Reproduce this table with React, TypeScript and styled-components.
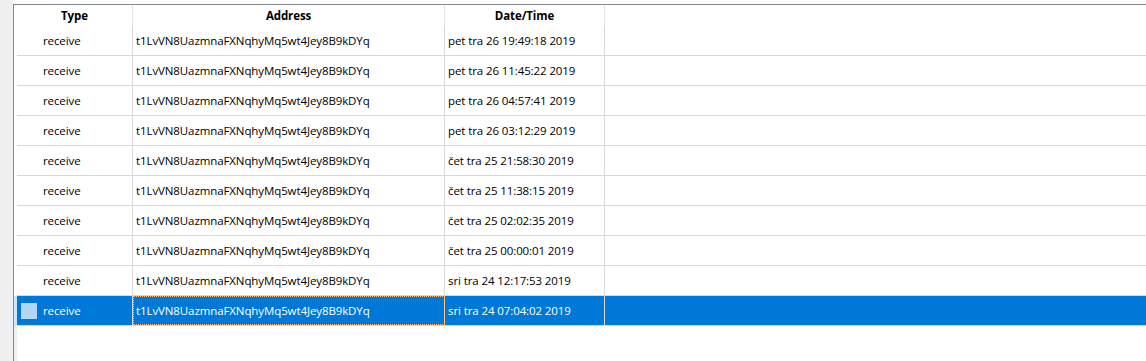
import React from 'react';
import styled, { createGlobalStyle } from 'styled-components';

const ROWS = [
  { type: 'receive', address: 't1LvVN8UazmnaFXNqhyMq5wt4Jey8B9kDYq', date: 'pet tra 26 19:49:18 2019' },
  { type: 'receive', address: 't1LvVN8UazmnaFXNqhyMq5wt4Jey8B9kDYq', date: 'pet tra 26 11:45:22 2019' },
  { type: 'receive', address: 't1LvVN8UazmnaFXNqhyMq5wt4Jey8B9kDYq', date: 'pet tra 26 04:57:41 2019' },
  { type: 'receive', address: 't1LvVN8UazmnaFXNqhyMq5wt4Jey8B9kDYq', date: 'pet tra 26 03:12:29 2019' },
  { type: 'receive', address: 't1LvVN8UazmnaFXNqhyMq5wt4Jey8B9kDYq', date: 'čet tra 25 21:58:30 2019' },
  { type: 'receive', address: 't1LvVN8UazmnaFXNqhyMq5wt4Jey8B9kDYq', date: 'čet tra 25 11:38:15 2019' },
  { type: 'receive', address: 't1LvVN8UazmnaFXNqhyMq5wt4Jey8B9kDYq', date: 'čet tra 25 02:02:35 2019' },
  { type: 'receive', address: 't1LvVN8UazmnaFXNqhyMq5wt4Jey8B9kDYq', date: 'čet tra 25 00:00:01 2019' },
  { type: 'receive', address: 't1LvVN8UazmnaFXNqhyMq5wt4Jey8B9kDYq', date: 'sri tra 24 12:17:53 2019' },
  { type: 'receive', address: 't1LvVN8UazmnaFXNqhyMq5wt4Jey8B9kDYq', date: 'sri tra 24 07:04:02 2019' },
];

const SELECTED = 9;

const App = () => {
  return (
    <>
      <GlobalStyle />
      <Page>
        <Gutter />
        <Frame>
          <HeaderRow>
            <Corner />
            <HeadCell width={116}>Type</HeadCell>
            <HeadCell width={312}>Address</HeadCell>
            <HeadCell width={160}>Date/Time</HeadCell>
            <HeadFill />
          </HeaderRow>
          {ROWS.map((row, idx) => {
            const sel = idx === SELECTED;
            return (
              <Row key={idx} selected={sel}>
                <RowHandle selected={sel} />
                <TypeCell>
                  <Deco selected={sel} />
                  {row.type}
                </TypeCell>
                <Cell width={312} focused={sel}>{row.address}</Cell>
                <Cell width={160}>{row.date}</Cell>
                <FillCell />
              </Row>
            );
          })}
          <Rest>
            <RestHandle />
          </Rest>
        </Frame>
      </Page>
    </>
  );
};

export default App;

const GlobalStyle = createGlobalStyle`
  html, body {
    margin: 0;
    padding: 0;
    background: #ffffff;
  }
  body {
    font-family: 'Open Sans', 'Noto Sans', sans-serif;
    font-size: 11.5px;
    letter-spacing: -0.1px;
    color: #000000;
  }
`;

const Page = styled.div`
  display: flex;
  width: 1146px;
  height: 361px;
  overflow: hidden;
`;

const Gutter = styled.div`
  width: 13px;
  flex-shrink: 0;
  background: #f0f0f0;
`;

const Frame = styled.div`
  flex: 1;
  display: flex;
  flex-direction: column;
  margin-top: 4px;
  border-top: 1px solid #828790;
  border-left: 1px solid #828790;
  background: #ffffff;
`;

const HeaderRow = styled.div`
  display: flex;
  height: 21px;
`;

const Corner = styled.div`
  width: 3px;
  flex-shrink: 0;
`;

const HeadCell = styled.div<{ width: number }>`
  width: ${p => p.width}px;
  flex-shrink: 0;
  box-sizing: border-box;
  border-right: 1px solid #e5e5e5;
  display: flex;
  align-items: center;
  justify-content: center;
  font-weight: 700;
`;

const HeadFill = styled.div`
  flex: 1;
`;

const Row = styled.div<{ selected: boolean }>`
  display: flex;
  height: 30px;
  box-sizing: border-box;
  border-bottom: 1px solid #d8d8d8;
  background: ${p => (p.selected ? '#0078d7' : '#ffffff')};
  color: ${p => (p.selected ? '#ffffff' : '#000000')};
`;

const RowHandle = styled.div<{ selected: boolean }>`
  width: 3px;
  flex-shrink: 0;
  margin-bottom: -1px;
  background: ${p => (p.selected ? '#cce8ff' : '#ffffff')};
`;

const Cell = styled.div<{ width: number; focused?: boolean }>`
  width: ${p => p.width}px;
  flex-shrink: 0;
  box-sizing: border-box;
  border-right: 1px solid #d8d8d8;
  display: flex;
  align-items: center;
  padding-left: 3px;
  white-space: nowrap;
  overflow: hidden;
  outline: ${p => (p.focused ? '1px dotted #f5b971' : 'none')};
  outline-offset: -1px;
`;

const TypeCell = styled.div`
  width: 116px;
  flex-shrink: 0;
  box-sizing: border-box;
  border-right: 1px solid #d8d8d8;
  display: flex;
  align-items: center;
  padding-left: 4px;
  gap: 6px;
`;

const Deco = styled.span<{ selected: boolean }>`
  width: 16px;
  height: 16px;
  flex-shrink: 0;
  background: ${p => (p.selected ? '#b3d7f3' : 'transparent')};
`;

const FillCell = styled.div`
  flex: 1;
`;

const Rest = styled.div`
  flex: 1;
  display: flex;
`;

const RestHandle = styled.div`
  width: 3px;
  background: #f0f0f0;
`;
